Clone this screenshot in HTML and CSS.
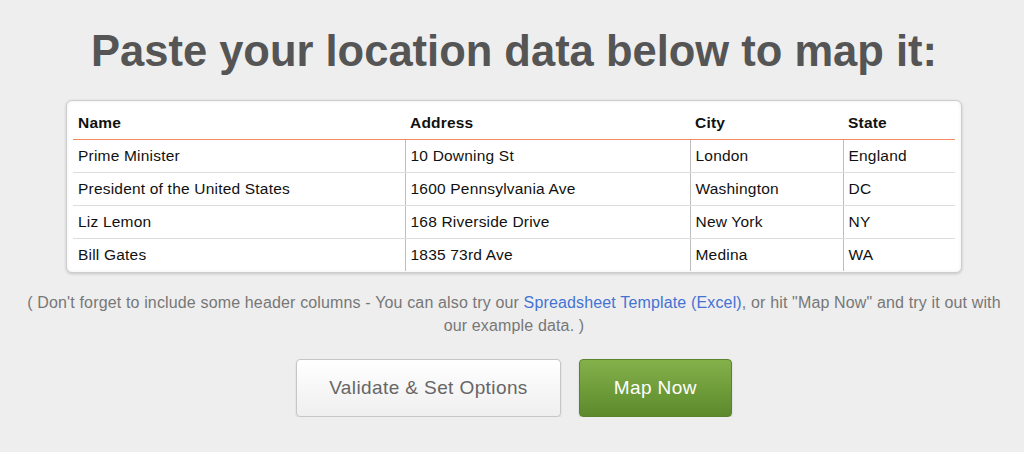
FILE: index.html
```html
<!DOCTYPE html>
<html lang="en">
<head>
<meta charset="utf-8">
<title>Paste your location data</title>
<link rel="stylesheet" href="styles.css">
</head>
<body>
<main class="page">
  <h1 class="title">Paste your location data below to map it:</h1>

  <div class="sheet">
    <table class="grid">
      <colgroup>
        <col class="c-name">
        <col class="c-addr">
        <col class="c-city">
        <col class="c-state">
      </colgroup>
      <thead>
        <tr><th>Name</th><th>Address</th><th>City</th><th>State</th></tr>
      </thead>
      <tbody>
        <tr><td>Prime Minister</td><td>10 Downing St</td><td>London</td><td>England</td></tr>
        <tr><td>President of the United States</td><td>1600 Pennsylvania Ave</td><td>Washington</td><td>DC</td></tr>
        <tr><td>Liz Lemon</td><td>168 Riverside Drive</td><td>New York</td><td>NY</td></tr>
        <tr><td>Bill Gates</td><td>1835 73rd Ave</td><td>Medina</td><td>WA</td></tr>
      </tbody>
    </table>
  </div>

  <p class="hint">( Don't forget to include some header columns - You can also try our <a href="#" class="link">Spreadsheet Template (Excel)</a>, or hit "Map Now" and try it out with our example data. )</p>

  <div class="actions">
    <button class="btn btn-light" type="button">Validate &amp; Set Options</button>
    <button class="btn btn-go" type="button">Map Now</button>
  </div>
</main>
</body>
</html>
```

FILE: styles.css
```css
html, body {
  margin: 0;
  padding: 0;
}

body {
  background: #eeeeee;
  font-family: "Liberation Sans", Arial, Helvetica, sans-serif;
  padding-left: 4px;
}

.page {
  display: flex;
  flex-direction: column;
  align-items: center;
}

.title {
  margin: 25px 0 0;
  font-size: 43.5px;
  line-height: 52px;
  font-weight: bold;
  color: #555555;
}

.sheet {
  box-sizing: border-box;
  width: 896px;
  margin-top: 23px;
  padding: 6px 6px 1px;
  background: #ffffff;
  border: 1px solid #cdcdcd;
  border-radius: 6px;
  box-shadow: 0 1px 3px rgba(0, 0, 0, 0.18), inset 0 0 4px rgba(0, 0, 0, 0.06);
}

.grid {
  width: 100%;
  border-collapse: collapse;
  table-layout: fixed;
  font-size: 15.5px;
  letter-spacing: 0.2px;
  color: #111111;
}

.c-name { width: 332px; }
.c-addr { width: 285px; }
.c-city { width: 153px; }
.c-state { width: auto; }

.grid th {
  height: 32px;
  padding: 0 5px;
  text-align: left;
  font-weight: bold;
  color: #111111;
  border-bottom: 1px solid #f08a62;
}

.grid td {
  height: 32px;
  padding: 0 6px 0 5px;
  border-bottom: 1px solid #dddddd;
  border-left: 1px solid #bdbdbd;
  white-space: nowrap;
}

.grid td:first-child {
  border-left: none;
}

.grid tbody tr:last-child td {
  border-bottom: none;
}

.hint {
  box-sizing: border-box;
  width: 100%;
  margin: 18px 0 0;
  padding: 0 20px;
  text-align: center;
  font-size: 16px;
  letter-spacing: 0.15px;
  line-height: 23px;
  color: #777777;
}

.link {
  color: #4473d4;
  text-decoration: none;
}

.actions {
  display: flex;
  gap: 18px;
  margin-top: 22px;
}

.btn {
  box-sizing: border-box;
  height: 58px;
  border-radius: 4px;
  font-family: inherit;
  font-size: 19px;
  letter-spacing: 0.4px;
  cursor: pointer;
}

.btn-light {
  padding: 0 32px;
  color: #666666;
  background: linear-gradient(#ffffff, #efefef);
  border: 1px solid #c6c6c6;
  box-shadow: 0 1px 2px rgba(0, 0, 0, 0.12);
}

.btn-go {
  padding: 0 34px;
  color: #ffffff;
  background: linear-gradient(#84b14a, #5c8a2c);
  border: 1px solid #5b8230;
  box-shadow: 0 1px 2px rgba(0, 0, 0, 0.15);
}
```
